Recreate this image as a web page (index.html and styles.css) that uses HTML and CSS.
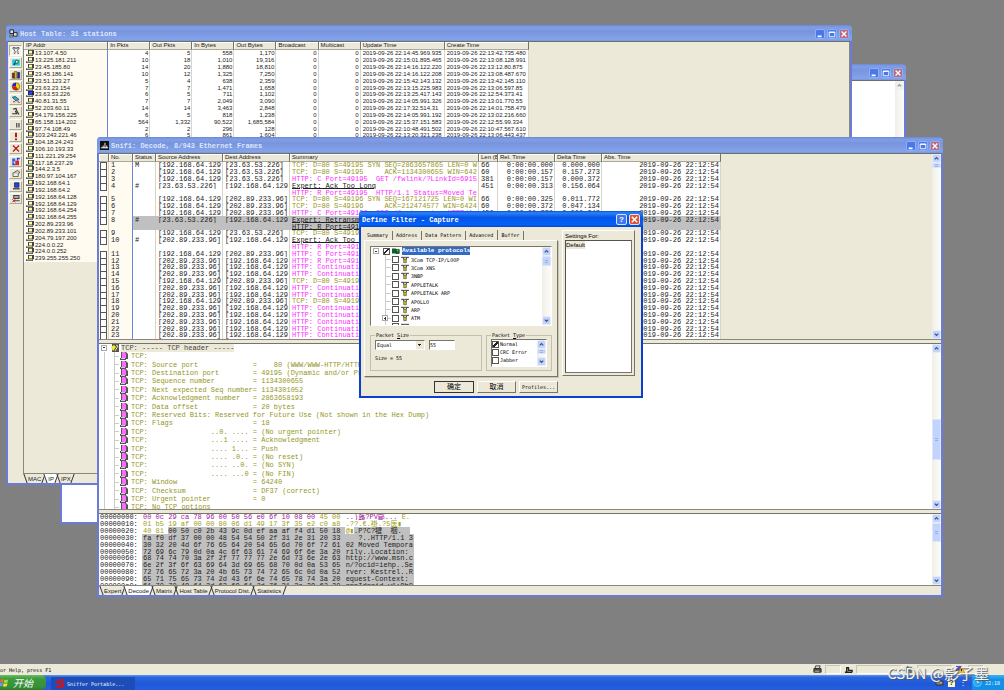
FILE: index.html
```html
<!DOCTYPE html>
<html lang="zh-CN">
<head>
    <meta charset="UTF-8">
    <meta name="viewport" content="width=device-width, initial-scale=1.0">
    <title>Sniffer Portable</title>
    <link rel="stylesheet" href="styles.css">
</head>
<body>
    <svg class="sprite" aria-hidden="true">
        <symbol id="i-host" viewBox="0 0 8 7" preserveAspectRatio="none"><path d="M2 0h6v5H2z" fill="#444"/><path d="M3 1h3v3H3z" fill="#ffffa0"/><path d="M0 5h7v2H0z" fill="#555"/><path d="M1 5.500h5" stroke="#ccc"/></symbol>
        <symbol id="i-host-blue" viewBox="0 0 8 7" preserveAspectRatio="none"><path d="M2 0h6v5H2z" fill="#225"/><path d="M3 1h3v3H3z" fill="#24f"/><path d="M0 5h7v2H0z" fill="#555"/><path d="M1 5.500h5" stroke="#ccc"/></symbol>
        <symbol id="i-app" viewBox="0 0 10 10"><path d="M1 1h4v4H1zM5 4h4v4H5z" fill="#ddd" stroke="#222"/><path d="M1 7h3v2H1z" fill="#cc4" stroke="#333" stroke-width=".6"/></symbol>
        <symbol id="i-decode" viewBox="0 0 10 10"><path d="M0 0h10v10H0z" fill="#111"/><path d="M1 7.500h8M3.500 8V5M5.500 8V2M7.500 8V5" stroke="#fff"/></symbol>
        <symbol id="i-table" viewBox="0 0 12 12"><path d="M2 2h3v2H2zM7 2h3v2H7zM3 5l2 2M9 5L7 7M3 8h3M7 8h3M3 10h2M8 10h2" fill="none" stroke="#444"/></symbol>
        <symbol id="i-search" viewBox="0 0 12 12"><path d="M1 2h10v8H1z" fill="#1cd"/><circle cx="7" cy="5" r="2" fill="#ff5" stroke="#027"/><path d="M3 9l2-2" stroke="#024" stroke-width="1.500"/></symbol>
        <symbol id="i-bars" viewBox="0 0 12 12"><path d="M1 4h3v7H1z" fill="#821" stroke="#222" stroke-width=".6"/><path d="M4 2h3v9H4z" fill="#db1" stroke="#222" stroke-width=".6"/><path d="M8 3h3v8H8z" fill="#22a" stroke="#222" stroke-width=".6"/></symbol>
        <symbol id="i-pie" viewBox="0 0 12 12"><circle cx="6" cy="6" r="5" fill="#ed0"/><path d="M6 6V1a5 5 0 0 0-5 5z" fill="#22d"/><path d="M6 6H1a5 5 0 0 0 8 4z" fill="#e11"/><circle cx="6" cy="6" r="5" fill="none" stroke="#333" stroke-width=".7"/></symbol>
        <symbol id="i-tool" viewBox="0 0 12 12"><path d="M1 3l4-1 5 4-4 2-2-2z" fill="#2bb" stroke="#138"/><path d="M2 9h3M8 9l3 1" stroke="#d22" stroke-width="1.500"/></symbol>
        <symbol id="i-pick" viewBox="0 0 12 12"><path d="M2 3l4-1 1 3 3 5M1 9h6L5 5" fill="none" stroke="#333" stroke-width="1.500"/></symbol>
        <symbol id="i-pause" viewBox="0 0 12 12"><path d="M7 4v6M10 4v6" stroke="#555" stroke-width="1.800"/></symbol>
        <symbol id="i-bang" viewBox="0 0 12 12"><path d="M6 1v6M6 8.500v2.500" stroke="#a11" stroke-width="2.500"/></symbol>
        <symbol id="i-x" viewBox="0 0 12 12"><path d="M2 2l8 8M10 2L2 10" stroke="#b11" stroke-width="1.600"/></symbol>
        <symbol id="i-reset" viewBox="0 0 12 12"><path d="M1 2h4v4H1z" fill="#26e"/><path d="M5 5h5v6H5z" fill="#d23"/><path d="M2 6v4h3M8 5V2h3" fill="none" stroke="#24d" stroke-width="1.800"/></symbol>
        <symbol id="i-prop" viewBox="0 0 12 12"><path d="M2 5h7v5H2z" fill="#eee" stroke="#444"/><path d="M4 4l4-2 3 2-2 3" fill="#ccc" stroke="#444"/></symbol>
        <symbol id="i-pc" viewBox="0 0 12 12"><path d="M4 1h6v6H4z" fill="#24d" stroke="#226"/><path d="M2 9h9" stroke="#555" stroke-width="2"/></symbol>
        <symbol id="i-nopc" viewBox="0 0 12 12"><path d="M3 2h7v4H3zM2 9h9" fill="#aaa" stroke="#444" stroke-width="1.400"/><path d="M1 7l4 4M5 7l-4 4" stroke="#d22" stroke-width="1.300"/></symbol>
        <symbol id="i-field" viewBox="0 0 8 8"><path d="M1 0h5l2 2v5H6v1H0V6h1z" fill="#555"/><path d="M2 0h3l1 2v4H2z" fill="#ff6cff"/><path d="M1 6.500h4" stroke="#ccc"/></symbol>
        <symbol id="i-layer" viewBox="0 0 8 8"><path d="M1 0h7v8H1z" fill="#554"/><path d="M0 3l3-2 2 2-3 4z" fill="#ee3"/><path d="M5 1l2 1-3 5" fill="none" stroke="#ddd"/></symbol>
        <symbol id="i-net" viewBox="0 0 10 8"><path d="M0 1h5v6H0z" fill="#063"/><path d="M5 2h4v5H5z" fill="#272" stroke="#042"/><path d="M6 3h2" stroke="#ec3"/></symbol>
        <symbol id="i-proto" viewBox="0 0 9 8"><path d="M0 1h9M2 1l2 3M7 1L5 4" fill="none" stroke="#333"/><path d="M3 3h3v4H3z" fill="#cb2" stroke="#332" stroke-width=".6"/></symbol>
        <symbol id="i-printer" viewBox="0 0 10 10"><path d="M3 1h5l-1 3H2z" fill="#ddd" stroke="#333"/><path d="M1 4h8v4H1z" fill="#555" stroke="#222"/><path d="M2 7h5" stroke="#bb7"/></symbol>
        <symbol id="i-monitor" viewBox="0 0 10 10"><path d="M1 8h8M3 8V3h2v3h4v2" fill="none" stroke="#222" stroke-width="1.500"/></symbol>
        <symbol id="i-stat" viewBox="0 0 10 10"><path d="M1 2h7v7H1z" fill="#3a8"/><path d="M3 1v6M6 3v6" stroke="#d36" stroke-width="1.500"/></symbol>
        <symbol id="i-warn" viewBox="0 0 10 10"><path d="M0 1h6v6H0z" fill="#55c"/><path d="M6 2l4 7H2z" fill="#fc2" stroke="#a60" stroke-width=".6"/><path d="M6 4v3" stroke="#000"/></symbol>
        <symbol id="i-flag" viewBox="0 0 12 12"><path d="M1 2q2-1 4 0L4 6Q2 5 0 6z" fill="#f63"/><path d="M6 2q2 1 5 0l-1 4q-3 1-5 0z" fill="#9d4"/><path d="M0 7q2-1 4 0l-1 4q-2-1-3 0z" fill="#69f"/><path d="M5 7q2 1 5 0l-1 4q-3 1-5 0z" fill="#fd3"/></symbol>
        <symbol id="i-s" viewBox="0 0 10 10"><path d="M9 1.500H4Q1.500 1.500 2 3.500T5 5t3 1.500T6 8.500H0" fill="none" stroke="#d11" stroke-width="2.200"/></symbol>
        <symbol id="i-keys" viewBox="0 0 9 7"><path d="M1 2h7v4H1z" fill="#888" stroke="#333"/><path d="M2 3.500h5" stroke="#eee" stroke-width=".7" stroke-dasharray="1 .5"/></symbol>
        <symbol id="i-up" viewBox="0 0 8 8"><path d="M2 5l2-2 2 2" fill="none" stroke="#3c5484" stroke-width="1.400"/></symbol>
        <symbol id="i-down" viewBox="0 0 8 8"><path d="M2 3l2 2 2-2" fill="none" stroke="#3c5484" stroke-width="1.400"/></symbol>
        <symbol id="i-min" viewBox="0 0 10 10"><path d="M2 8h5" stroke="#fff" stroke-width="2"/></symbol>
        <symbol id="i-max" viewBox="0 0 10 10"><path d="M1.500 2.500h7v6h-7zM1.500 3h7" fill="none" stroke="#fff" stroke-width="1.200"/></symbol>
        <symbol id="i-close" viewBox="0 0 10 10"><path d="M2 2l6 6M8 2L2 8" stroke="#fff" stroke-width="1.700"/></symbol>
    </svg>

    <main class="desktop">
        <section class="window win-back">
            <header class="titlebar"><span class="controls"></span></header>
            <div class="window-body blank"><div class="scrollbar disabled"></div></div>
        </section>

        <section class="window win-host">
            <header class="titlebar">
                <svg class="icon"><use href="#i-app"/></svg>
                <h1>Host Table: 31 stations</h1>
                <span class="controls"></span>
            </header>
            <div class="window-body host">
                <nav class="toolbar" id="toolbar"></nav>
                <div class="host-main">
                    <div class="host-list">
                        <table class="host-table">
                            <colgroup><col class="c85"><col class="c42"><col class="c42"><col class="c42"><col class="c42"><col class="c42"><col class="c42"><col class="c84"><col class="c84"></colgroup>
                            <thead><tr><th>IP Addr</th><th>In Pkts</th><th>Out Pkts</th><th>In Bytes</th><th>Out Bytes</th><th>Broadcast</th><th>Multicast</th><th>Update Time</th><th>Create Time</th></tr></thead>
                            <tbody id="hosts"></tbody>
                        </table>
                    </div>
                    <div class="sheet-tabs">
                        <button>MAC</button><button class="active">IP</button><button>IPX</button>
                    </div>
                </div>
            </div>
        </section>

        <section class="window win-decode">
            <header class="titlebar">
                <svg class="icon"><use href="#i-decode"/></svg>
                <h1>Snif1: Decode, 8/943 Ethernet Frames</h1>
                <span class="controls"></span>
            </header>
            <div class="window-body decode">
                <div class="pane pane-packets">
                    <div class="pane-content">
                        <table class="packets">
                            <colgroup><col class="p-check"><col class="p-no"><col class="p-status"><col class="p-addr"><col class="p-addr"><col class="p-summary"><col class="p-len"><col class="p-rel"><col class="p-delta"><col class="p-abs"></colgroup>
                            <thead><tr><th></th><th>No.</th><th>Status</th><th>Source Address</th><th>Dest Address</th><th>Summary</th><th>Len (B)</th><th>Rel. Time</th><th>Delta Time</th><th>Abs. Time</th></tr></thead>
                            <tbody id="packets"></tbody>
                        </table>
                    </div>
                    <div class="scrollbar thumb-top"></div>
                </div>
                <div class="pane pane-tree">
                    <div class="pane-content"><ul class="fields" id="fields"></ul></div>
                    <div class="scrollbar thumb-mid"></div>
                </div>
                <div class="pane pane-hex">
                    <div class="pane-content"><table class="hex"><tbody id="hex"></tbody></table></div>
                    <div class="scrollbar thumb-hex"></div>
                </div>
                <div class="sheet-tabs">
                    <button>Expert</button><button class="active">Decode</button><button>Matrix</button><button>Host Table</button><button>Protocol Dist.</button><button>Statistics</button>
                </div>
            </div>
        </section>

        <section class="dialog" role="dialog" aria-label="Define Filter - Capture">
            <header class="titlebar">
                <h1>Define Filter - Capture</h1>
                <span class="controls">
                    <button class="ctl help" aria-label="Help">?</button>
                    <button class="ctl close" aria-label="Close"><svg><use href="#i-close"/></svg></button>
                </span>
            </header>
            <div class="dialog-body">
                <div class="filter">
                    <div class="tabs">
                        <button>Summary</button><button>Address</button><button>Data Pattern</button><button class="active">Advanced</button><button>Buffer</button>
                    </div>
                    <div class="tab-page">
                        <div class="listbox protocols">
                            <ul id="protocols"></ul>
                            <div class="scrollbar thumb-small"></div>
                        </div>
                        <div class="groups">
                            <fieldset class="size">
                                <legend>Packet <u>S</u>ize</legend>
                                <div class="size-row">
                                    <select aria-label="Packet size"><option>Equal</option></select>
                                    <input type="text" value="55" aria-label="Size in bytes">
                                </div>
                                <p>Size = 55</p>
                            </fieldset>
                            <fieldset class="type">
                                <legend>Packet <u>T</u>ype</legend>
                                <div class="listbox">
                                    <div class="checks">
                                        <label><input type="checkbox" checked>Normal</label>
                                        <label><input type="checkbox">CRC Error</label>
                                        <label><input type="checkbox">Jabber</label>
                                    </div>
                                    <div class="scrollbar thumb-type"></div>
                                </div>
                            </fieldset>
                        </div>
                    </div>
                    <div class="actions">
                        <button class="default">确定</button><button>取消</button><button>Profiles...</button>
                    </div>
                </div>
                <div class="settings">
                    <h2>Settings For:</h2>
                    <div class="listbox"><span>Default</span></div>
                </div>
            </div>
        </section>
    </main>

    <footer class="statusbar">
        <span class="hint">or Help, press F1</span>
        <svg class="icon"><use href="#i-printer"/></svg><span class="cell short"></span>
        <svg class="icon"><use href="#i-monitor"/></svg><span class="cell wide"></span>
        <svg class="icon"><use href="#i-stat"/></svg><span class="cell"></span>
        <svg class="icon"><use href="#i-warn"/></svg><span class="cell short"></span>
    </footer>
    <div class="taskbar">
        <button class="start"><svg class="icon"><use href="#i-flag"/></svg>开始</button>
        <button class="task"><svg class="icon"><use href="#i-s"/></svg>Sniffer Portable...</button>
        <div class="lang"><svg class="icon"><use href="#i-keys"/></svg><span class="help-box">?</span><span class="dots">⋮</span></div>
        <div class="tray"><span class="arrow">‹</span><time>22:18</time></div>
    </div>
    <div class="watermark">CSDN @影子墨</div>

    <script src="script.js"></script>
</body>
</html>
```
FILE: styles.css
```css
* {
    margin: 0;
    padding: 0;
    box-sizing: border-box;
}

:root {
    --face: #ece9d8;
    --sans: "Liberation Sans", sans-serif;
    --mono: "Liberation Mono", "Noto Sans CJK SC", monospace;
    --ui: "DejaVu Sans Mono", "Noto Sans CJK SC", monospace;
}

body {
    min-height: 100vh;
    display: flex;
    flex-direction: column;
    overflow: hidden;
    background: #808080;
    font-family: var(--sans);
    font-size: 6px;
    line-height: 8px;
    color: #222;
}

button, input, select {
    font: inherit;
    color: inherit;
    border: none;
    background: none;
}

ul { list-style: none; }

.sprite {
    position: absolute;
    width: 0;
    height: 0;
}

.icon {
    width: 9px;
    height: 9px;
    flex: none;
}

.desktop {
    flex: 1;
    position: relative;
}

/* windows */
.window {
    position: absolute;
    display: flex;
    flex-direction: column;
    padding: 0 2px 2px;
    border-radius: 4px 4px 0 0;
    background: #6b7bd8;
    overflow: hidden;
}

.win-host { left: 6px; right: 152px; top: 25px; bottom: 179px; }
.win-back { left: 60px; right: 98px; top: 64px; bottom: 140px; }
.win-decode { left: 97px; right: 61px; top: 137px; bottom: 67px; }

.titlebar {
    height: 16px;
    flex: none;
    display: flex;
    align-items: center;
    gap: 2px;
    margin: 0 -2px;
    padding: 1px 3px 0 3px;
    background: linear-gradient(#6d88d8, #7f9ee6 15%, #7994dd 40%, #82a4ec 90%, #7a94d8);
}

.titlebar h1 {
    flex: 1;
    font: bold 7px/10px var(--mono);
    color: #dce6fa;
    white-space: pre;
}

.controls {
    display: flex;
    gap: 2px;
    margin-left: auto;
}

.ctl {
    width: 10px;
    height: 10px;
    border: 1px solid #8fb0f4;
    border-radius: 2px;
    background: #4a78ea;
    color: #fff;
}

.ctl svg {
    display: block;
    width: 8px;
    height: 8px;
}

.ctl.close { background: #b8697c; }

.window-body {
    flex: 1;
    min-height: 0;
    display: flex;
    border-top: 1px solid #716f64;
    background: var(--face);
}

.window-body.blank {
    background: #fff;
    justify-content: flex-end;
}

/* scrollbars */
.scrollbar {
    width: 9px;
    flex: none;
    display: flex;
    flex-direction: column;
    background: linear-gradient(90deg, #f0efe6, #fdfdfa);
}

.scrollbar button {
    height: 9px;
    flex: none;
    border: 1px solid #e4ecfc;
    border-radius: 2px;
    background: #c3d4fb;
}

.scrollbar button svg {
    display: block;
    width: 7px;
    height: 7px;
}

.scrollbar .track {
    flex: 1;
    min-height: 0;
}

.scrollbar .thumb {
    height: 5px;
    border: 1px solid #dbe6fd;
    border-radius: 1px;
    background: repeating-linear-gradient(#98b0e8 0 1px, #c3d4fb 1px 2px) center / 3px 3px no-repeat, #c3d4fb;
}

.thumb-mid .track { padding-top: 66px; }
.thumb-mid .thumb { height: 41px; }
.thumb-hex .thumb { height: 19px; }
.thumb-small .thumb { height: 10px; }
.disabled button { background: #f0efe6; opacity: .6; }
.disabled .thumb { display: none; }

/* host table */
.toolbar {
    width: 15px;
    flex: none;
    padding: 3px 1px;
    display: flex;
    flex-direction: column;
    gap: 1px;
}

.toolbar button {
    height: 11px;
    padding-left: 1px;
    border: 1px solid;
    border-color: #fff #aca899 #aca899 #fff;
}

.toolbar button:first-child {
    border-color: #aca899 #fff #fff #aca899;
    background: #f6f5ee;
}

.toolbar .gap { margin-top: 1px; }

.toolbar svg {
    display: block;
    width: 10px;
    height: 9px;
}

.host-main {
    flex: 1;
    min-width: 0;
    display: flex;
    flex-direction: column;
}

.host-list {
    flex: 1;
    border: 1px solid #8a887c;
    border-top: none;
}

table {
    border-collapse: separate;
    border-spacing: 0;
    table-layout: fixed;
}

th {
    height: 8px;
    padding: 0 0 0 2px;
    font: normal 6px/7px var(--sans);
    text-align: left;
    background: var(--face);
    border-right: 1px solid #77756a;
    border-bottom: 1px solid #aca899;
    box-shadow: inset 1px 1px #fff;
    overflow: hidden;
    white-space: nowrap;
}

td {
    line-height: 6px;
    overflow: hidden;
    white-space: pre;
}

.host-table {
    width: 505px;
    height: 220px;
}

.c85 { width: 84px; }
.c42 { width: 42px; }
.c84 { width: 84px; }

.host-table td {
    padding: 0 1px 0 2px;
    background: #fff;
    border-right: 1px solid #d8d5c8;
    text-align: right;
}

.host-table td:first-child {
    text-align: left;
    background: #fffbf0;
    border-right-color: #6688dc;
}

.host-table td:nth-child(n+8) { text-align: left; }

.host-table svg {
    width: 8px;
    height: 6px;
    margin-right: 1px;
    vertical-align: top;
}

/* sheet tabs under the panes */
.sheet-tabs {
    height: 9px;
    flex: none;
    display: flex;
    padding-left: 1px;
}

.sheet-tabs button {
    position: relative;
    z-index: 0;
    padding: 0 3px 0 4px;
    line-height: 8px;
}

.sheet-tabs button::before,
.sheet-tabs button::after {
    content: "";
    position: absolute;
    z-index: -1;
    top: 0;
    bottom: 0;
    width: 50%;
}

.sheet-tabs button::before {
    left: 1px;
    border-left: 1px solid #333;
    transform: skewX(20deg);
}

.sheet-tabs button::after {
    right: 0;
    border-right: 1px solid #333;
    transform: skewX(-20deg);
}

.sheet-tabs .active::before,
.sheet-tabs .active::after { background: #fff; }

/* decode window */
.decode { flex-direction: column; }

.pane {
    min-height: 0;
    display: flex;
    background: #fff;
    border-bottom: 1px solid #8a887c;
}

.pane-content {
    flex: 1;
    min-width: 0;
    overflow: hidden;
}

.pane-packets {
    flex: 186 1 0;
    background: var(--face);
}

.pane-tree { flex: 166 1 0; }
.pane-hex { flex: 72 1 0; }

.pane + .pane {
    margin-top: 3px;
    border-top: 1px solid #77756a;
}

.packets {
    width: 622px;
    height: 185px;
    font: 7px var(--mono);
}

.p-check { width: 10px; }
.p-no { width: 24px; }
.p-status { width: 23px; }
.p-addr { width: 67px; }
.p-summary { width: 189px; }
.p-len { width: 19px; }
.p-rel { width: 57px; }
.p-delta { width: 47px; }
.p-abs { width: 119px; }

.packets td {
    padding: 0 1px 0 2px;
    background: #fff;
    border-right: 1px solid #d8d5c8;
}

.packets td:nth-child(1) {
    padding: 0 1px;
    background: #fffbf0;
    overflow: visible;
}

.packets td:nth-child(2) {
    background: #fffbf0;
    border-right-color: #6688dc;
}

.packets td:nth-child(n+8) { text-align: right; }

.packets .selected td:nth-child(n+3) {
    background: #c0c0c0;
    border-color: #c0c0c0;
}

input[type="checkbox"] {
    appearance: none;
    width: 7px;
    height: 7px;
    flex: none;
    border: 1px solid #555;
    background: #fff;
}

.packets input[type="checkbox"] {
    display: block;
    position: relative;
    height: 8px;
    margin-bottom: -2px;
}

input[type="checkbox"]:checked {
    background: linear-gradient(135deg, #fff 35%, #222 35% 60%, #fff 60%);
}

.tcp { color: #96961e; }
.http { color: #ff2cff; }

.expert {
    text-decoration: underline;
    text-underline-offset: 0;
}

.fields {
    height: 168px;
    display: grid;
    grid-template-rows: repeat(20, minmax(0, 1fr));
    font: 7px/8px var(--mono);
}

.fields li {
    display: flex;
    align-items: center;
    padding-left: 21px;
    gap: 3px;
    color: #96961e;
    white-space: pre;
    background: linear-gradient(#ccc, #ccc) 5px 0 / 1px 100% no-repeat, linear-gradient(#ccc, #ccc) 15px 0 / 1px 100% no-repeat, linear-gradient(#ccc, #ccc) 15px 50% / 5px 1px no-repeat;
}

.fields .icon {
    width: 8px;
    height: 8px;
}

.fields li.head {
    padding-left: 2px;
    color: #444;
    background: none;
    gap: 2px;
}

.fields .head span { background: var(--face); }

.toggle {
    width: 6px;
    height: 6px;
    flex: none;
    border: 1px solid #aaa;
    background: linear-gradient(#333, #333) center / 2px 1px no-repeat, #fff;
}

.head .toggle { margin-right: 2px; }

.hex {
    height: 76px;
    font: 7px var(--mono);
}

.hex td {
    padding-left: 1px;
    line-height: 6px;
}

.hex .off { width: 43px; }
.hex .bytes { width: 202px; }
.hex .ascii { width: 69px; }
.hex .sel { background: #c0c0c0; }
.hex .mac { color: #a020a0; }
.hex .ip { color: #a0a020; }

/* filter dialog */
.dialog {
    position: absolute;
    left: 359px;
    top: 211px;
    width: 284px;
    padding: 0 2px 2px;
    border-radius: 4px 4px 0 0;
    background: #0b3fd0;
    color: #000;
    font: 5px/8px var(--ui);
    overflow: hidden;
}

.dialog .titlebar {
    padding: 1px 3px 0;
    background: linear-gradient(#0a4fd8, #2b83f8 12%, #0355e8 40%, #0560f6 85%, #0346c8);
}

.dialog .titlebar h1 { color: #fff; }

.dialog .ctl {
    width: 11px;
    height: 11px;
    border-color: #d5e2fc;
    background: #3f76ec;
    color: #fff;
    font: bold 8px/9px var(--sans);
}

.dialog .ctl svg { width: 9px; height: 9px; }
.dialog .ctl.close { background: #e0532f; }

.dialog-body {
    display: flex;
    gap: 4px;
    padding: 3px 6px 3px 3px;
    background: var(--face);
}

.filter { flex: 1; }

.tabs {
    display: flex;
    align-items: flex-end;
}

.tabs button {
    height: 9px;
    padding: 0 4px 0 3px;
    line-height: 9px;
    border-right: 1px solid #77756a;
}

.tabs .active {
    height: 10px;
    line-height: 8px;
}

.tab-page {
    padding: 5px;
    border: 1px solid;
    border-color: #fff #77756a #77756a #fff;
    box-shadow: 1px 1px #c8c5b4;
}

.listbox {
    display: flex;
    background: #fff;
    border: 1px solid;
    border-color: #77756a #fff #fff #77756a;
}

.protocols { height: 80px; }

.protocols ul {
    flex: 1;
    height: 84px;
    display: grid;
    grid-template-rows: repeat(10, minmax(0, 1fr));
    overflow: hidden;
    clip-path: inset(0 0 6px 0);
}

.protocols li {
    display: flex;
    align-items: center;
    gap: 2px;
    padding-left: 21px;
    background: linear-gradient(#ccc, #ccc) 14px 0 / 1px 100% no-repeat, linear-gradient(#ccc, #ccc) 14px 50% / 6px 1px no-repeat;
}

.protocols li.root {
    padding-left: 2px;
    background: none;
}

.protocols li.branch { padding-left: 11px; }
.protocols .root input { margin-left: 2px; }
.protocols .branch input { margin-left: 2px; }

.protocols .branch .toggle {
    background: linear-gradient(#333, #333) center / 2px 1px no-repeat, linear-gradient(#333, #333) center / 1px 3px no-repeat, #fff;
}

.protocols label {
    display: flex;
    align-items: center;
    gap: 2px;
}

.protocols .root span {
    font: bold 6px/8px var(--mono);
    color: #fff;
    background: #316ac5;
}

.protocols svg {
    width: 8px;
    height: 8px;
    flex: none;
}

.groups {
    display: flex;
    gap: 4px;
    margin-top: 5px;
}

fieldset {
    padding: 0 4px 3px;
    border: 1px solid #c2bfae;
    min-width: 0;
}

.size { flex: 1; }
.type { width: 66px; }

legend { padding: 0 1px; }

.size-row {
    display: flex;
    gap: 4px;
    margin: 1px 0 4px;
}

.size select,
.size input {
    height: 10px;
    border: 1px solid;
    border-color: #77756a #fff #fff #77756a;
    background: #fff;
}

.size select {
    width: 50px;
    appearance: none;
    padding-left: 1px;
    background: linear-gradient(#222, #222) right 3px top 3px / 3px 1px no-repeat, linear-gradient(#222, #222) right 4px top 4px / 1px 1px no-repeat, linear-gradient(90deg, transparent 40px, var(--face) 40px), #fff;
}

.size input { width: 26px; }

.type .listbox { height: 28px; }
.checks { flex: 1; }

.checks label {
    display: flex;
    align-items: center;
    gap: 1px;
    height: 8px;
}

.actions {
    display: flex;
    justify-content: flex-end;
    gap: 3px;
    margin-top: 4px;
}

.actions button {
    width: 39px;
    height: 12px;
    line-height: 9px;
    border: 1px solid;
    border-color: #fff #77756a #77756a #fff;
}

.actions button:not(:last-child) { font-size: 7px; }

.actions .default {
    width: 40px;
    border-color: #333;
}

.settings {
    width: 73px;
    height: 146px;
    display: flex;
    flex-direction: column;
    padding: 1px 2px 2px;
    border: 1px solid;
    border-color: #fff #77756a #77756a #fff;
    font: 6px/8px var(--sans);
}

.settings h2 { font: inherit; }
.settings .listbox { flex: 1; border-color: #55534a #77756a #77756a #55534a; }
.settings .listbox span { height: 8px; background: var(--face); }

/* status bar and taskbar */
.statusbar {
    height: 11px;
    display: flex;
    align-items: center;
    gap: 3px;
    padding-right: 20px;
    background: var(--face);
}

.hint {
    flex: 1;
    font: 5px/8px var(--ui);
    color: #000;
}

.cell {
    width: 36px;
    height: 9px;
    border: 1px solid;
    border-color: #c8c5b4 #fff #fff #c8c5b4;
}

.cell.short { width: 16px; }
.cell.wide { width: 46px; }

.taskbar {
    height: 15px;
    display: flex;
    align-items: stretch;
    color: #fff;
    background: linear-gradient(#5a9af4, #2a66e0 15%, #2158d8 60%, #245fe0);
    font: 5px/8px var(--ui);
}

.taskbar button {
    display: flex;
    align-items: center;
    color: #fff;
}

.start {
    width: 46px;
    gap: 4px;
    background: linear-gradient(#6cbc68, #3c9a3c 25%, #388f38 80%, #2d7a2d);
    border-radius: 0 5px 5px 0;
}

.taskbar .start {
    background: linear-gradient(#6cbc68, #3c9a3c 25%, #388f38 80%, #2d7a2d);
    font: italic 10px/12px "Noto Sans CJK SC", sans-serif;
}

.task {
    width: 84px;
    margin: 2px 0 0 5px;
    padding-left: 5px;
    gap: 2px;
    background: #1d4eb8;
    border-radius: 1px;
}

.lang {
    flex: 1;
    display: flex;
    align-items: center;
    justify-content: flex-end;
    gap: 4px;
    padding-right: 5px;
}

.help-box {
    width: 7px;
    height: 8px;
    background: #fff8c8;
    color: #222;
    font: bold 7px/8px var(--sans);
    text-align: center;
}

.dots { font-size: 8px; }

.tray {
    display: flex;
    align-items: center;
    gap: 3px;
    padding: 0 4px 0 1px;
    background: linear-gradient(#3cb4f4, #1290e8 30%, #1290e8);
}

.tray .arrow {
    width: 9px;
    height: 9px;
    border-radius: 50%;
    background: #2aa4f0;
    border: 1px solid #5cc0f8;
    font: bold 9px/5px var(--sans);
    text-align: center;
}

.watermark {
    position: absolute;
    right: 15px;
    bottom: 8px;
    font: 15px/18px "Noto Sans CJK SC", sans-serif;
    color: #f4f4f4;
    text-shadow: 1px 1px 1px #555;
}
```
FILE: script.js
```javascript
const $ = id => document.getElementById(id);
const icon = name => `<svg><use href="#i-${name}"/></svg>`;

// ip, in pkts, out pkts, in bytes, out bytes, update time, create time
const hosts = [
    ['13.107.4.50', '4', '5', '558', '1,170', '22:14:45.969.935', '22:13:42.735.480'],
    ['13.225.181.211', '10', '18', '1,010', '19,316', '22:15:01.895.465', '22:13:08.128.991'],
    ['23.45.185.80', '14', '20', '1,880', '18,810', '22:14:16.122.220', '22:13:12.80.875'],
    ['23.45.186.141', '10', '12', '1,325', '7,250', '22:14:16.122.208', '22:13:08.487.670'],
    ['23.51.123.27', '5', '4', '638', '2,359', '22:15:42.143.132', '22:13:42.145.110'],
    ['23.63.23.154', '7', '7', '1,471', '1,658', '22:13:15.225.983', '22:13:06.597.85'],
    ['23.63.53.226', '6', '5', '711', '1,102', '22:13:25.417.143', '22:12:54.373.41'],
    ['40.81.31.55', '7', '7', '2,049', '3,090', '22:14:05.991.326', '22:13:01.770.55'],
    ['52.203.60.11', '14', '14', '3,463', '2,848', '22:17:32.514.31', '22:14:01.758.479'],
    ['54.179.156.225', '6', '5', '818', '1,238', '22:14:05.991.192', '22:13:02.216.660'],
    ['65.158.114.202', '564', '1,332', '90,522', '1,685,584', '22:15:37.151.583', '22:12:55.99.334'],
    ['97.74.108.49', '2', '2', '296', '128', '22:10:48.491.502', '22:10:47.567.610'],
    ['103.243.221.46', '6', '5', '861', '1,604', '22:13:20.321.238', '22:13:06.443.437'],
    ...['104.18.24.243', '106.10.193.33', '111.221.29.254', '117.18.237.29', '144.2.3.5', '180.97.104.167',
        '192.168.64.1', '192.168.64.2', '192.168.64.128', '192.168.64.129', '192.168.64.254', '192.168.64.255',
        '202.89.233.96', '202.89.233.101', '204.79.197.200', '224.0.0.22', '224.0.0.252', '239.255.255.250'].map(ip => [ip])
];

$('hosts').innerHTML = hosts.map(([ip, inP = '', outP = '', inB = '', outB = '', upd, cre]) => `
    <tr><td>${icon(ip === '23.63.53.226' ? 'host-blue' : 'host')}${ip}</td><td>${inP}</td><td>${outP}</td><td>${inB}</td><td>${outB}</td><td>${inP && 0}</td><td>${inP && 0}</td><td>${upd ? '2019-09-26 ' + upd : ''}</td><td>${cre ? '2019-09-26 ' + cre : ''}</td></tr>`).join('');

const tools = ['table', 'search', 'bars', 'pie', '|tool', 'pick', '|pause', 'bang', 'x', '|reset', 'prop', '|pc', 'nopc'];
$('toolbar').innerHTML = tools.map(t => {
    const name = t.replace('|', '');
    return `<button class="${t[0] === '|' ? 'gap' : ''}" aria-label="${name}">${icon(name)}</button>`;
}).join('');

const me = '[192.168.64.129';
const a = '[23.63.53.226]';
const b = '[202.89.233.96]';
const cont = 'HTTP: Continuation of frame';

// no, status, source, dest, summary, len, rel, delta
const packets = [
    [1, 'M', me, a, 'TCP: D=80 S=49195 SYN SEQ=2863657865 LEN=0 W', 66, '0:00:00.000', '0.000.000'],
    [2, '', me, a, 'TCP: D=80 S=49195     ACK=1134300655 WIN=642', 60, '0:00:00.157', '0.157.273'],
    [3, '', me, a, 'HTTP: C Port=49195  GET /fwlink/?LinkId=6915', 381, '0:00:00.157', '0.000.372'],
    [4, '#', a, me, 'Expert: Ack Too Long', 451, '0:00:00.313', '0.156.064'],
    ['', '', '', '', 'HTTP: R Port=49195  HTTP/1.1 Status=Moved Te'],
    [5, '', me, b, 'TCP: D=80 S=49196 SYN SEQ=167121725 LEN=0 WI', 66, '0:00:00.325', '0.011.772'],
    [6, '', me, b, 'TCP: D=80 S=49196     ACK=212474577 WIN=6424', 60, '0:00:00.372', '0.047.134'],
    [7, '', me, b, 'HTTP: C Port=49196  GET /favicon.ico HTTP/1.', 450, '0:00:00.372', '0.000.343'],
    [8, '#', a, me, 'Expert: Retransmission', 451, '0:00:00.469', '0.096.820'],
    ['', '', '', '', 'HTTP: R Port=49195  HTTP/1.1 Status=Moved Te'],
    [9, '', me, a, 'TCP: D=80 S=49195     ACK=1134301052'],
    [10, '#', b, me, 'Expert: Ack Too Long'],
    ['', '', '', '', 'HTTP: R Port=49196  HTTP/1.1 Status=OK'],
    [11, '', me, b, 'HTTP: C Port=49196  GET /'],
    [12, '', b, me, 'HTTP: R Port=49196  HTTP/1.1 Status=OK'],
    [13, '', b, me, cont], [14, '', b, me, cont],
    [15, '', me, b, 'TCP: D=80 S=49196'],
    [16, '', b, me, cont], [17, '', b, me, cont],
    [18, '', me, b, 'TCP: D=80 S=49196'],
    [19, '', b, me, cont], [20, '', b, me, cont], [21, '', b, me, cont], [22, '', b, me, cont], [23, '', b, me, cont]
];

$('packets').innerHTML = packets.map(([no, st, src, dst, sum, len = '', rel = '', delta = ''], i) => {
    const selected = i === 8 || i === 9;
    const kind = selected || sum.startsWith('Expert') ? 'expert' : sum.startsWith('TCP') ? 'tcp' : 'http';
    return `<tr class="${selected ? 'selected' : ''}"><td>${no && `<input type="checkbox" aria-label="Frame ${no}">`}</td><td>${no}</td><td>${st}</td><td>${src}</td><td>${dst}</td><td class="${kind}">${sum}</td><td>${len}</td><td>${rel}</td><td>${delta}</td><td>${no && '2019-09-26 22:12:54'}</td></tr>`;
}).join('');

const fields = [
    ['', ''],
    ['Source port', '   80 (WWW/WWW-HTTP/HTTP)'],
    ['Destination port', '49195 (Dynamic and/or Private)'],
    ['Sequence number', '1134300655'],
    ['Next expected Seq number', '1134301052'],
    ['Acknowledgment number', '2863658193'],
    ['Data offset', '20 bytes'],
    ['Reserved Bits: Reserved for Future Use (Not shown in the Hex Dump)', ''],
    ['Flags', '18'],
    ['              ..0. ....', '(No urgent pointer)'],
    ['              ...1 ....', 'Acknowledgment'],
    ['              .... 1...', 'Push'],
    ['              .... .0..', '(No reset)'],
    ['              .... ..0.', '(No SYN)'],
    ['              .... ...0', '(No FIN)'],
    ['Window', '64240'],
    ['Checksum', 'DF37 (correct)'],
    ['Urgent pointer', '0'],
    ['No TCP options', '']
];

$('fields').innerHTML = `<li class="head"><i class="toggle"></i><svg class="icon"><use href="#i-layer"/></svg><span>TCP: ----- TCP header -----</span></li>` +
    fields.map(([k, v]) => `<li><svg class="icon"><use href="#i-field"/></svg><span>TCP: ${v ? k.padEnd(24) + '= ' + v : k}</span></li>`).join('');

const hex = [
    ['<span class="mac">00 0c 29 ca 78 96 00 50 56 e0 6f 10 08 00</span> <span class="ip">45 00</span>', '<span class="mac">..)蕗?PV郿...</span> <span class="ip">E.</span>'],
    ['<span class="ip">01 b5 19 af 00 00 80 06 d1 49 17 3f 35 e2 c0 a8</span>', '<span class="ip">.??.€.褂.?5医▮</span>'],
    ['<span class="ip">40 81</span> <span class="sel">00 50 c0 2b 43 9c 0d ef aa af f4 d1 50 18 </span>', '<span class="ip">@▮</span><span class="sel">.P?C?犍  栶.  </span>'],
    ['fa f0 df 37 00 00 48 54 54 50 2f 31 2e 31 20 33', '   ?..HTTP/1.1 3'],
    ['30 32 20 4d 6f 76 65 64 20 54 65 6d 70 6f 72 61', '02 Moved Tempora'],
    ['72 69 6c 79 0d 0a 4c 6f 63 61 74 69 6f 6e 3a 20', 'rily..Location: '],
    ['68 74 74 70 3a 2f 2f 77 77 77 2e 6d 73 6e 2e 63', 'http://www.msn.c'],
    ['6e 2f 3f 6f 63 69 64 3d 69 65 68 70 0d 0a 53 65', 'n/?ocid=iehp..Se'],
    ['72 76 65 72 3a 20 4b 65 73 74 72 65 6c 0d 0a 52', 'rver: Kestrel..R'],
    ['65 71 75 65 73 74 2d 43 6f 6e 74 65 78 74 3a 20', 'equest-Context: '],
    ['61 70 70 49 64 3d 63 69 64 2d 76 31 3a 39 62 30', 'appId=cid-v1:9b0']
];

$('hex').innerHTML = hex.map(([bytes, text], i) => {
    const sel = i > 2 ? ' sel' : '';
    return `<tr><td class="off">${(i * 16).toString(16).padStart(8, '0')}:</td><td class="bytes${sel}">${bytes}</td><td class="ascii${sel}">${text}</td></tr>`;
}).join('');

const protocols = ['3Com TCP-IP/LOOP', '3Com XNS', '3NBP', 'APPLETALK', 'APPLETALK ARP', 'APOLLO', 'ARP', 'ATM', 'BPDU'];
$('protocols').innerHTML = `<li class="root"><i class="toggle"></i><label><input type="checkbox" checked>${icon('net')}<span>Available protocols</span></label></li>` +
    protocols.map(p => `<li class="${p === 'ATM' ? 'branch' : ''}">${p === 'ATM' ? '<i class="toggle"></i>' : ''}<label><input type="checkbox">${icon('proto')}<span>${p}</span></label></li>`).join('');

document.querySelectorAll('.window .controls').forEach(c => {
    c.innerHTML = ['min', 'max', 'close'].map(n => `<button class="ctl ${n}" aria-label="${n}">${icon(n)}</button>`).join('');
});

document.querySelectorAll('.scrollbar').forEach(s => {
    s.innerHTML = `<button aria-label="Scroll up">${icon('up')}</button><div class="track"><div class="thumb"></div></div><button aria-label="Scroll down">${icon('down')}</button>`;
});
```
